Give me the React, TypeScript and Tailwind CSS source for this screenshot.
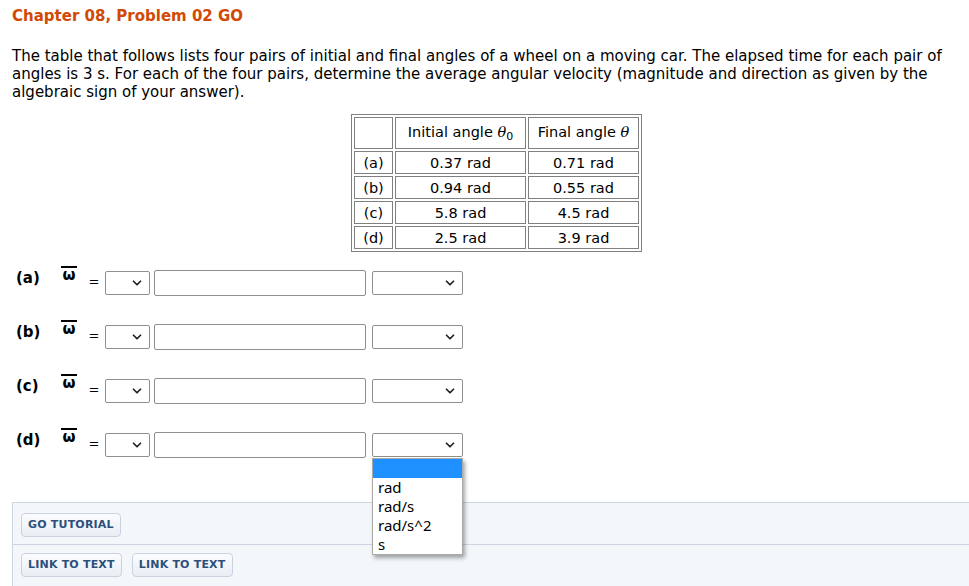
import { ChevronDown } from 'lucide-react';

const rows = [
  { id: '(a)', initial: '0.37 rad', final: '0.71 rad' },
  { id: '(b)', initial: '0.94 rad', final: '0.55 rad' },
  { id: '(c)', initial: '5.8 rad', final: '4.5 rad' },
  { id: '(d)', initial: '2.5 rad', final: '3.9 rad' },
];

const units = ['rad', 'rad/s', 'rad/s^2', 's'];

function FakeSelect({ width }: { width: string }) {
  return (
    <div className={`${width} h-[24px] border border-[#8f8f8f] rounded-[2px] bg-white flex items-center justify-end pr-[5px]`}>
      <ChevronDown size={14} strokeWidth={3} className="text-[#222]" />
    </div>
  );
}

function AnswerRow({ label, open }: { label: string; open?: boolean }) {
  return (
    <div className="flex items-start h-[54px]">
      <div className="w-[43px] pl-[4px] pt-[3px] font-bold text-[15px] leading-[18px] text-black">{label}</div>
      <div className="w-[28px] flex justify-center">
        <span className="border-t-[2px] border-black leading-[14px] text-[15px] font-bold px-[1px]">ω</span>
      </div>
      <div className="w-[22px] text-center pt-[6px] text-[13px]">=</div>
      <div className="pt-[4px] flex items-center gap-[4px]">
        <FakeSelect width="w-[45px]" />
        <div className="w-[212px] h-[26px] border border-[#8f8f8f] rounded-[2px] bg-white" />
        <div className="relative ml-[2px]">
          <FakeSelect width="w-[91px]" />
          {open && (
            <div className="absolute left-0 top-[25px] w-[91px] bg-white border border-[#aaa] shadow-[2px_3px_4px_rgba(0,0,0,0.35)] z-10 font-['Noto_Sans',sans-serif] text-[15px] leading-[19px] text-black">
              <div className="h-[19px] bg-[#1e90ff]" />
              {units.map(u => (
                <div key={u} className="pl-[5px]">{u}</div>
              ))}
            </div>
          )}
        </div>
      </div>
    </div>
  );
}

function PanelButton({ children }: { children: string }) {
  return (
    <button className="h-[24px] px-[6px] rounded-[4px] border border-[#c9d2de] bg-gradient-to-b from-[#fbfcfd] to-[#e9eef4] text-[11px] font-bold text-[#2c4f7c] tracking-[0.2px]">
      {children}
    </button>
  );
}

export default function App() {
  return (
    <div className="min-h-screen bg-white font-['DejaVu_Sans',Verdana,sans-serif] text-black">
      <div className="pl-[12px] pt-[6px]">
        <h1 className="text-[15px] font-bold text-[#d14a05] leading-[20px]">Chapter 08, Problem 02 GO</h1>

        <p className="mt-[21px] text-[15px] leading-[18px] pr-[12px]">
          The table that follows lists four pairs of initial and final angles of a wheel on a moving car. The elapsed time for each pair of angles is 3 s. For each of the four pairs, determine the average angular velocity (magnitude and direction as given by the algebraic sign of your answer).
        </p>

        {/* Data table */}
        <div className="mt-[13px] ml-[339px]">
          <table className="border border-[#808080] border-separate border-spacing-[2px] text-[14.5px]">
            <thead>
              <tr>
                <th className="border border-[#808080] w-[39px] h-[32px] font-normal" />
                <th className="border border-[#808080] w-[131px] font-normal px-[6px]">
                  Initial angle <i className="font-['DejaVu_Serif',serif]">θ</i><sub className="text-[11px]">0</sub>
                </th>
                <th className="border border-[#808080] w-[111px] font-normal px-[6px]">
                  Final angle <i className="font-['DejaVu_Serif',serif]">θ</i>
                </th>
              </tr>
            </thead>
            <tbody>
              {rows.map(r => (
                <tr key={r.id}>
                  <td className="border border-[#808080] h-[23px] text-center leading-[20px]">{r.id}</td>
                  <td className="border border-[#808080] text-center leading-[20px]">{r.initial}</td>
                  <td className="border border-[#808080] text-center leading-[20px]">{r.final}</td>
                </tr>
              ))}
            </tbody>
          </table>
        </div>

        {/* Answer rows */}
        <div className="mt-[14px]">
          <AnswerRow label="(a)" />
          <AnswerRow label="(b)" />
          <AnswerRow label="(c)" />
          <AnswerRow label="(d)" open />
        </div>

        {/* Bottom panel */}
        <div className="mt-[20px] border-t border-l border-[#cdd5e0] bg-[#f4f7fa]">
          <div className="px-[8px] pt-[8px] pb-[7px] border-b border-[#cdd5e0]">
            <PanelButton>GO TUTORIAL</PanelButton>
          </div>
          <div className="px-[8px] pt-[8px] pb-[12px] flex gap-[10px]">
            <PanelButton>LINK TO TEXT</PanelButton>
            <PanelButton>LINK TO TEXT</PanelButton>
          </div>
        </div>
      </div>
    </div>
  );
}
